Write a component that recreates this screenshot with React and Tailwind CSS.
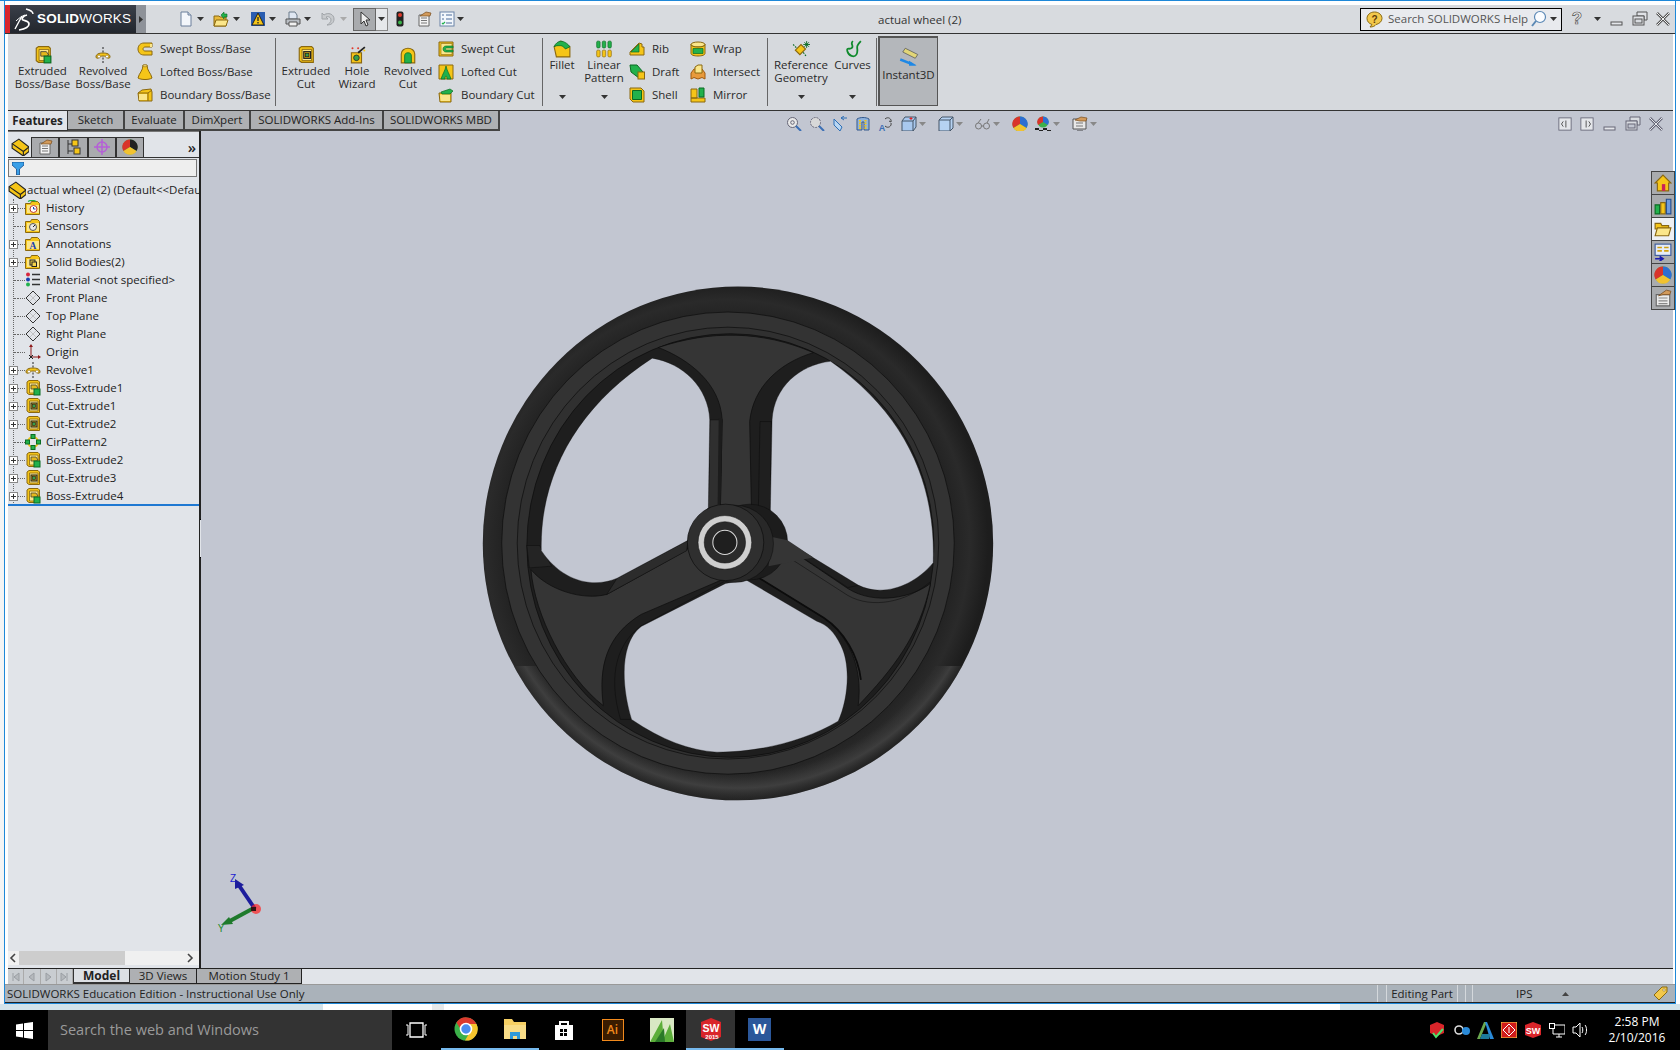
import React from "react";

const Y = "#f5c518";
const YL = "#fbe68a";
const O = "#8a6810";
const G = "#22b14c";
const GD = "#0b6b22";

const Ic = ({ s = 16, children }) => (
  <svg width={s} height={s} viewBox="0 0 16 16" className="shrink-0">
    {children}
  </svg>
);

const Cube = ({ s = 16, children }) => (
  <Ic s={s}>
    <path d="M2 2l2-1.500h9l1.500 1.500v12.500H4L2 13z" fill={Y} stroke={O} />
    <path d="M4.500 3h8.500v10H4.500z" fill={YL} stroke={O} strokeWidth=".8" />
    {children}
  </Ic>
);
const BossIcon = ({ s }) => (
  <Cube s={s}>
    <path d="M6 5h5l2 3-2 1H6z" fill="#e5b91c" stroke="#333" strokeWidth=".7" />
    <rect x="9" y="9" width="6" height="6" fill={G} stroke={GD} />
  </Cube>
);
const CutIcon = ({ s }) => (
  <Cube s={s}>
    <rect x="6" y="5" width="6" height="6" fill="#c79e18" stroke="#222" />
    <rect x="7.500" y="6.500" width="3" height="3" fill="#35a04a" stroke="#222" strokeWidth=".6" />
  </Cube>
);
const RevolveIcon = () => (
  <Ic>
    <path d="M8 0v16" stroke="#222" strokeWidth="1" strokeDasharray="2 1.500" />
    <path d="M1 10c0-3 3-4 7-4s7 1 7 4c0 1.500-2 1.500-3 .5-1-1-2-1.500-4-1.500s-3 .5-4 1.500-3 1-3-.5z" fill={Y} stroke={O} />
    <circle cx="4" cy="9.500" r="1.500" fill="#fff" stroke={O} strokeWidth=".6" />
    <circle cx="12" cy="9.500" r="1.500" fill="#fff" stroke={O} strokeWidth=".6" />
  </Ic>
);
const SweptBoss = () => (
  <Ic>
    <path d="M15 2H7C3 2 1 5 1 8s2 6 6 6h8v-4H8C7 10 6 9 6 8s1-2 2-2h7z" fill={Y} stroke={O} />
    <path d="M14 3v3" stroke={YL} strokeWidth="2" />
  </Ic>
);
const LoftBoss = () => (
  <Ic>
    <path d="M6 1h4c0 6 4 8 5 13-3 2-11 2-14 0 1-5 5-7 5-13z" fill={Y} stroke={O} />
    <ellipse cx="8" cy="1.800" rx="2" ry="1" fill={YL} stroke={O} strokeWidth=".6" />
  </Ic>
);
const BoundaryBoss = () => (
  <Ic>
    <path d="M1 6l4-3 9-1 1 3v9H2z" fill={Y} stroke={O} />
    <path d="M1 6h10l4-3M11 6v8" fill="none" stroke={O} />
    <path d="M2 7h8v6H2z" fill={YL} />
  </Ic>
);
const SweptCut = () => (
  <Ic>
    <path d="M1 1h14v14H1z" fill={Y} stroke={O} />
    <path d="M3 2.500h11v11H3z" fill={YL} stroke={O} strokeWidth=".6" />
    <path d="M15 5H8C6 5 5 6.500 5 8s1 3 3 3h7V9H8.500C8 9 7.500 8.500 7.500 8s.5-1 1-1H15z" fill={G} stroke={GD} strokeWidth=".6" />
  </Ic>
);
const LoftCut = () => (
  <Ic>
    <path d="M1 1h14v14H1z" fill={Y} stroke={O} />
    <path d="M8 2C7 7 5 9 3 15h4c0-2 .5-3 1-3s1 1 1 3h4C11 9 9 7 8 2z" fill={G} stroke={GD} strokeWidth=".7" />
  </Ic>
);
const BoundaryCut = () => (
  <Ic>
    <path d="M1 6h12v9H2z" fill={Y} stroke={O} />
    <path d="M2 7.500h10V14H2.500z" fill={YL} />
    <path d="M3 5l9-3 3 2-3 3H4z" fill={G} stroke={GD} strokeWidth=".7" />
  </Ic>
);
const Wizard = () => (
  <Ic s={18}>
    <path d="M3 6h9v9H3z" fill={Y} stroke={O} />
    <circle cx="7.500" cy="10.500" r="2.500" fill="#35a04a" stroke="#222" strokeWidth=".7" />
    <path d="M9 6l6-5" stroke="#222" strokeWidth="1.500" />
    <circle cx="4" cy="2" r=".9" fill="#e0392b" />
    <circle cx="9" cy="2" r=".9" fill="#e0392b" />
    <circle cx="14.500" cy="4" r=".9" fill={Y} />
  </Ic>
);
const RevolveCut = () => (
  <Ic s={18}>
    <path d="M2 15V7c0-3 3-5 6-5s6 2 6 5v8z" fill={Y} stroke={O} />
    <path d="M5 15V9c0-2 1-3 3-3s3 1 3 3v6z" fill={G} stroke={GD} strokeWidth=".7" />
  </Ic>
);
const Fillet = () => (
  <Ic s={18}>
    <path d="M1 6l6-5 8 5v9H3z" fill={Y} stroke={O} />
    <path d="M1 6c1-3 4-5 6-5 3 0 7 3 8 5l-4 2C9 5 7 5 6 5 4 5 2 5 1 6z" fill={G} stroke={GD} strokeWidth=".7" />
  </Ic>
);
const LinearPattern = () => (
  <Ic s={18}>
    {[1.500, 6.500, 11.500].map((x) => (
      <g key={x}>
        <rect x={x} y="1" width="3" height="6" rx="1" fill={G} stroke={GD} strokeWidth=".6" />
        <rect x={x} y="9" width="3" height="6" rx="1" fill={Y} stroke={O} strokeWidth=".6" />
      </g>
    ))}
  </Ic>
);
const Rib = () => (
  <Ic>
    <path d="M1 14V11l9-9 3 1v3h2v8z" fill={Y} stroke={O} />
    <path d="M2 11l8-8v8z" fill={G} stroke={GD} strokeWidth=".7" />
  </Ic>
);
const Draft = () => (
  <Ic>
    <path d="M1 1l7 0 6 7-4 6-8-6z" fill={G} stroke={GD} />
    <rect x="9" y="8" width="6.500" height="7" fill={Y} stroke={O} />
  </Ic>
);
const Shell = () => (
  <Ic>
    <path d="M1 1h11l3 3v11H4l-3-3z" fill={Y} stroke={O} />
    <path d="M3.500 3.500h9v9h-9z" fill={G} stroke={GD} />
  </Ic>
);
const Wrap = () => (
  <Ic>
    <ellipse cx="8" cy="3.500" rx="7" ry="2.500" fill={YL} stroke={O} />
    <path d="M1 3.500v9c0 1.500 3 2.500 7 2.500s7-1 7-2.500v-9c0 1.500-3 2.500-7 2.500s-7-1-7-2.500z" fill={Y} stroke={O} />
    <path d="M3 7.500h10v5H3z" fill={G} stroke={GD} strokeWidth=".7" />
  </Ic>
);
const Intersect = () => (
  <Ic>
    <path d="M1 9l3-4h8l3 4v6l-3-1.500L8 15l-4-1.500L1 15z" fill="#e89a3c" stroke="#a05a10" />
    <path d="M5 3l3-2h4v8H5z" fill={YL} stroke={O} />
  </Ic>
);
const Mirror = () => (
  <Ic>
    <path d="M1 2h6v9H1zM1 11h14v4H1z" fill={Y} stroke={O} />
    <path d="M9 1h5v9H9z" fill={G} stroke={GD} />
  </Ic>
);
const RefGeom = () => (
  <Ic s={18}>
    <path d="M3 9l5-5 4 4-5 5z" fill={Y} stroke={O} />
    <path d="M1 4l3 3M10 11l3 4" stroke={GD} strokeDasharray="1.500 1" />
    <path d="M13 1v6M10 4h6M11 2l4 4M15 2l-4 4" stroke={GD} strokeWidth=".8" />
  </Ic>
);
const Curves = () => (
  <Ic s={18}>
    <path d="M8 1C5 3 9 5 7 7S2 6 3 10s6 6 8 3 0-6 1-8 2-3 3-4" fill="none" stroke="#0f8a2c" strokeWidth="1.600" />
  </Ic>
);
const Instant3D = () => (
  <Ic s={20}>
    <path d="M5 1l10 5-2 3L3 4z" fill="#e2d677" stroke="#555" strokeWidth=".6" />
    <path d="M1 10l9 3.500" stroke="#1e88e5" strokeWidth="2" />
    <path d="M8 11l6 3.500-1 .5H8z" fill="#1e88e5" />
  </Ic>
);

// quick access toolbar
const NewDoc = () => (
  <Ic>
    <path d="M3 1h7l3 3v11H3z" fill="#f3f6fb" stroke="#6b7f9b" />
    <path d="M10 1v3h3" fill="#d0d9e6" stroke="#6b7f9b" />
  </Ic>
);
const OpenDoc = () => (
  <Ic>
    <path d="M1 5h5l1 1h6v9H1z" fill="#e9b93a" stroke={O} />
    <path d="M3 9h12l-2 6H1z" fill={YL} stroke={O} />
    <path d="M8 4l3-3v2h3v3h-3v2z" fill={G} stroke={GD} strokeWidth=".6" />
  </Ic>
);
const FileProps = () => (
  <Ic>
    <rect x="1" y="1" width="14" height="14" fill="#2a5db0" />
    <path d="M8 2l6 12H2z" fill={Y} stroke="#222" />
    <path d="M8 6v4M8 11v1.500" stroke="#222" strokeWidth="1.300" />
  </Ic>
);
const PrintI = () => (
  <Ic>
    <path d="M4 1h6l2 3v4H4z" fill="#dfe7f2" stroke="#6a7a8a" />
    <path d="M1 8h14v5H1z" fill="#b9bec4" stroke="#555" />
    <path d="M4 11h8v4H4z" fill="#f0f0f0" stroke="#555" />
  </Ic>
);
const UndoI = () => (
  <Ic>
    <path d="M2 2v6h6L6 6c2-1 5 0 5 3 0 2-2 4-4 5 4 0 7-2 7-6 0-5-6-7-10-4z" fill="#c8cbce" stroke="#a0a4a8" />
  </Ic>
);
const ArrowCursor = () => (
  <Ic>
    <path d="M4 1v12l3-3 2 5 2-1-2-5h4z" fill="#eee" stroke="#333" />
  </Ic>
);
const Traffic = () => (
  <Ic>
    <rect x="4.500" y="0.500" width="7" height="15" rx="2" fill="#222" />
    <circle cx="8" cy="4" r="2" fill="#e0392b" />
    <circle cx="8" cy="11.500" r="2" fill="#3bb54a" />
  </Ic>
);
const OptionsI = () => (
  <Ic>
    <path d="M3 4h10v11H3z" fill="#f3f3f3" stroke="#666" />
    <path d="M5 7h6M5 9.500h6M5 12h6" stroke="#777" />
    <path d="M4 5l6-4 5 1-1 3H8z" fill="#d29a5b" stroke="#7a4d1d" strokeWidth=".7" />
  </Ic>
);
const ListI = () => (
  <Ic>
    <rect x="1" y="1" width="14" height="14" fill="#f3f7fc" stroke="#6b84a8" />
    <path d="M3 4h2M7 4h6M3 8h2M7 8h6M7 12h6" stroke="#4a6a9a" />
    <path d="M3 12l1 1 2-2" stroke={G} fill="none" strokeWidth="1.200" />
  </Ic>
);
const Caret = ({ c = "#333" }) => (
  <svg width="7" height="4" viewBox="0 0 7 4" className="shrink-0">
    <path d="M0 0h7L3.500 4z" fill={c} />
  </svg>
);

// feature tree
const Folder = ({ children }) => (
  <Ic>
    <path d="M0.500 3.500h5l1-2h6l2 2v11h-14z" fill={Y} stroke={O} />
    <path d="M2 5h12v8H2z" fill={YL} />
    {children}
  </Ic>
);
const TreeIcons = {
  history: (
    <Folder>
      <circle cx="8.500" cy="9" r="3.500" fill="#fff" stroke="#c0392b" />
      <path d="M8.500 7v2h2" stroke="#1a3fb0" fill="none" />
      <path d="M3 1.500c3-2 7-1 8 0" stroke={G} fill="none" strokeWidth="1.200" />
    </Folder>
  ),
  sensors: (
    <Folder>
      <circle cx="8" cy="9" r="3.500" fill="#e8e8e8" stroke="#555" />
      <path d="M8 9l2-2" stroke="#222" />
    </Folder>
  ),
  annotations: (
    <Folder>
      <text x="8" y="12.500" textAnchor="middle" fontSize="9.500" fontWeight="700" fontFamily="Liberation Serif, serif" fill="#1a3fb0">A</text>
    </Folder>
  ),
  solid: (
    <Folder>
      <rect x="5" y="6" width="5" height="5" fill="#f5d44a" stroke="#222" />
      <rect x="7" y="8" width="4.500" height="4.500" fill="#f5d44a" stroke="#222" />
    </Folder>
  ),
  material: (
    <Ic>
      <circle cx="3" cy="2.500" r="2" fill="#d7263d" />
      <circle cx="3" cy="7.500" r="2" fill="#1a3fb0" />
      <circle cx="3" cy="12.500" r="2" fill="#22b14c" />
      <path d="M7 2.500h8M7 7.500h8M7 12.500h8" stroke="#333" strokeWidth="1.600" />
    </Ic>
  ),
  plane: (
    <Ic>
      <path d="M8 1l7 7-7 7-7-7z" fill="none" stroke="#333" />
      <path d="M4.500 4.500l7 7M11.500 4.500l-7 7" stroke="#aaa" strokeWidth=".6" />
    </Ic>
  ),
  origin: (
    <Ic>
      <path d="M6 13V3" stroke="#8e1b1b" />
      <path d="M6 13h8" stroke="#8e1b1b" />
      <path d="M6 0l-2 3h4zM16 13l-3-2v4z" fill="#8e1b1b" />
      <path d="M4 11l4 4M8 11l-4 4" stroke="#222" />
    </Ic>
  ),
  revolve: <RevolveIcon />,
  boss: <BossIcon />,
  cut: <CutIcon />,
  pattern: (
    <Ic>
      <circle cx="8" cy="8" r="5" fill="none" stroke={Y} strokeWidth="2" />
      <rect x="6" y="0.500" width="4" height="4" fill={G} stroke={GD} />
      <rect x="6" y="11.500" width="4" height="4" fill={G} stroke={GD} />
      <rect x="0.500" y="6" width="4" height="4" fill={G} stroke={GD} />
      <rect x="11.500" y="6" width="4" height="4" fill={G} stroke={GD} />
    </Ic>
  ),
};

const TREE = [
  { label: "History", icon: "history", plus: true },
  { label: "Sensors", icon: "sensors" },
  { label: "Annotations", icon: "annotations", plus: true },
  { label: "Solid Bodies(2)", icon: "solid", plus: true },
  { label: "Material <not specified>", icon: "material" },
  { label: "Front Plane", icon: "plane" },
  { label: "Top Plane", icon: "plane" },
  { label: "Right Plane", icon: "plane" },
  { label: "Origin", icon: "origin" },
  { label: "Revolve1", icon: "revolve", plus: true },
  { label: "Boss-Extrude1", icon: "boss", plus: true },
  { label: "Cut-Extrude1", icon: "cut", plus: true },
  { label: "Cut-Extrude2", icon: "cut", plus: true },
  { label: "CirPattern2", icon: "pattern" },
  { label: "Boss-Extrude2", icon: "boss", plus: true },
  { label: "Cut-Extrude3", icon: "cut", plus: true },
  { label: "Boss-Extrude4", icon: "boss", plus: true },
];

function TreeRow({ row }) {
  return (
    <div className="flex items-center h-[18px]">
      {row.plus ? (
        <span className="-ml-[5px] w-[9px] h-[9px] shrink-0 border border-[#888] bg-white flex items-center justify-center text-[9px] leading-none text-[#333]">
          <svg width="5" height="5" viewBox="0 0 5 5">
            <path d="M0 2.500h5M2.500 0v5" stroke="#333" />
          </svg>
        </span>
      ) : (
        <span className="w-[4px] shrink-0 border-t border-dotted border-[#666]" />
      )}
      <span className="w-[7px] shrink-0 border-t border-dotted border-[#666]" />
      {TreeIcons[row.icon]}
      <span className="ml-[5px] whitespace-nowrap">{row.label}</span>
    </div>
  );
}

function BigBtn({ w, icon, lines, top, arrow }) {
  return (
    <div className={`${w} flex flex-col items-center shrink-0 ${top ? "pt-[5px]" : "pt-[11px]"}`}>
      <div className="h-[19px] flex items-center justify-center">{icon}</div>
      <div className="leading-[13px] text-center whitespace-nowrap">
        {lines.map((l) => (
          <div key={l}>{l}</div>
        ))}
      </div>
      {arrow && (
        <div className="mt-auto mb-[11px]">
          <Caret />
        </div>
      )}
    </div>
  );
}

function SmallGroup({ w, items }) {
  return (
    <div className={`${w} shrink-0 pt-[3px] flex flex-col`}>
      {items.map(([icon, label]) => (
        <div key={label} className="h-[23px] flex items-center gap-[7px] whitespace-nowrap">
          {icon}
          <span>{label}</span>
        </div>
      ))}
    </div>
  );
}

const Sep = () => <div className="w-px my-[4px] bg-[#666] shrink-0" />;

const TABS = [
  ["Sketch", "w-[57px]"],
  ["Evaluate", "w-[60px]"],
  ["DimXpert", "w-[66px]"],
  ["SOLIDWORKS Add-Ins", "w-[133px]"],
  ["SOLIDWORKS MBD", "w-[116px]"],
];

function WheelHeadsUp() {
  return (
    <div className="flex items-center ml-auto mt-[5px] h-[16px]">
      <div className="flex items-center absolute left-[778px]">
        <div className="w-[23px]"><Ic><circle cx="6.500" cy="6.500" r="5" fill="#e8e8e8" stroke="#667" /><circle cx="6.500" cy="6.500" r="1.800" fill="none" stroke="#667" /><path d="M10 10l5 5" stroke="#3b6fb5" strokeWidth="2" /></Ic></div>
        <div className="w-[23px]"><Ic><circle cx="6.500" cy="6.500" r="5" fill="#d8d8d8" stroke="#667" strokeDasharray="2 1" /><path d="M10 10l5 5" stroke="#3b6fb5" strokeWidth="2" /></Ic></div>
        <div className="w-[23px]"><Ic><path d="M2 3l8 8-2 4-6-6z" fill="#b9d6f2" stroke="#2c6eb5" /><path d="M9 2h6M9 2l3-2M9 2l3 2" stroke="#2c6eb5" /></Ic></div>
        <div className="w-[23px]"><Ic><path d="M2 3c3-2 9-2 12 0v11H9V6H7v8H2z" fill="#8fb3dd" stroke="#34598c" /><path d="M5 4v10M10.500 4v10" stroke={Y} strokeWidth="2" strokeDasharray="1.500 1" /></Ic></div>
        <div className="w-[23px]"><Ic><path d="M7 3c3-3 7 0 6 3M13 6l-2-1M7 10c3 3 7 0 6-3" fill="none" stroke="#444" /><text x="4" y="15" fontSize="9" fontWeight="700" fill="#3b6fb5" textAnchor="middle" fontFamily="Liberation Sans, sans-serif">A</text></Ic></div>
        <div className="w-[18px]"><Ic><path d="M1 5l3-4h11v10l-3 4H1z" fill="#a8c8ee" stroke="#456" /><path d="M1 5h11v10M12 5l3-4" fill="none" stroke="#456" /><path d="M10 1v3M8.500 2.500h3" stroke="#d22" /></Ic></div>
        <div className="w-[19px]"><Caret c="#888" /></div>
        <div className="w-[18px]"><Ic><path d="M1 4l3-3h11v11l-3 3H1z" fill="#b6d2f2" stroke="#456" /><path d="M12 4v11M12 4l3-3M1 4h11" fill="none" stroke="#456" /></Ic></div>
        <div className="w-[19px]"><Caret c="#888" /></div>
        <div className="w-[18px]"><Ic><circle cx="3.500" cy="10" r="3" fill="none" stroke="#777" /><circle cx="11.500" cy="10" r="3" fill="none" stroke="#777" /><path d="M6.500 10h2M3 7l3-4M12 7l2-4" stroke="#777" /></Ic></div>
        <div className="w-[19px]"><Caret c="#888" /></div>
        <div className="w-[23px]"><Ic><circle cx="8" cy="8" r="7.500" fill="#3cb14a" /><path d="M8 8V.500A7.500 7.500 0 0 0 1.500 12z" fill="#d9342b" /><path d="M8 8V.500a7.500 7.500 0 0 1 6.500 11.500z" fill="#2e6fd2" /><path d="M8 8l-6.500 4A7.500 7.500 0 0 0 14.500 12z" fill="#f2c230" /></Ic></div>
        <div className="w-[18px]"><Ic><circle cx="8" cy="6" r="5.500" fill="#3cb14a" /><path d="M8 6V.500A5.500 5.500 0 0 0 3 9z" fill="#d9342b" /><path d="M8 6V.500a5.500 5.500 0 0 1 5 8.500z" fill="#2e6fd2" /><path d="M0 12h4v2H0zM4 14h4v2H4zM8 12h4v2H8zM12 14h4v2h-4z" fill="#222" /></Ic></div>
        <div className="w-[19px]"><Caret c="#888" /></div>
        <div className="w-[18px]"><Ic><path d="M1 3h13v10H1z" fill="#e8e8e8" stroke="#555" /><path d="M4 7h7M4 10h7" stroke="#777" /><path d="M3 4l6-3 6 1-1 3H8z" fill="#d29a5b" stroke="#7a4d1d" strokeWidth=".7" /><path d="M5 15h6" stroke="#444" /></Ic></div>
        <Caret c="#888" />
      </div>
      <div className="flex items-center absolute right-[9px] gap-[7px] text-[#666]">
        {["M6 5L4 8l2 3M9 4v8", "M10 5l2 3-2 3M7 4v8"].map((d) => (
          <svg key={d} width="14" height="14" viewBox="0 0 16 16" className="mr-[1px]">
            <rect x="1" y="1" width="14" height="14" fill="#e4e6ea" stroke="#667" />
            <path d={d} stroke="#444" fill="none" />
          </svg>
        ))}
        <svg width="16" height="16" viewBox="0 0 16 16">
          <rect x="2" y="11" width="11" height="3" fill="#e4e6ea" stroke="#667" />
        </svg>
        <svg width="16" height="16" viewBox="0 0 16 16">
          <path d="M5 1h10v8h-3V5H5z" fill="#d8dbe0" stroke="#667" />
          <rect x="1" y="5" width="11" height="9" fill="#d8dbe0" stroke="#667" />
          <rect x="3" y="8" width="7" height="4" fill="#c2c6d1" stroke="#667" />
        </svg>
        <svg width="16" height="16" viewBox="0 0 16 16">
          <path d="M2 2l12 12M14 2L2 14" stroke="#667" strokeWidth="2.600" />
          <path d="M2 2l12 12M14 2L2 14" stroke="#e4e6ea" strokeWidth="1" />
        </svg>
      </div>
    </div>
  );
}

// drawn in the units of a 540px crop scaled to 1568
function Wheel() {
  const line = "#0c0c0c";
  return (
    <svg viewBox="0 0 1568 1568" className="absolute left-[268px] top-[139px] w-[540px] h-[540px]">
      <defs>
        <radialGradient id="tire" cx="0.480" cy="0.500" r="0.510">
          <stop offset="0.860" stopColor="#222222" />
          <stop offset="0.930" stopColor="#2a2a2a" />
          <stop offset="1" stopColor="#1d1d1d" />
        </radialGradient>
        <radialGradient id="lower" cx="0.500" cy="0.490" r="0.520">
          <stop offset="0.880" stopColor="#3c3c3c" stopOpacity="0" />
          <stop offset="0.935" stopColor="#444444" stopOpacity="0.8" />
          <stop offset="1" stopColor="#222" stopOpacity="0" />
        </radialGradient>
        <clipPath id="lowerClip">
          <path d="M100 1150h1350v420H100z" />
        </clipPath>
      </defs>
      <ellipse cx="781" cy="794" rx="741" ry="746" fill="url(#tire)" />
      <ellipse cx="781" cy="794" rx="741" ry="746" fill="url(#lower)" clipPath="url(#lowerClip)" />
      <ellipse cx="752" cy="793" rx="657" ry="671" fill="#333333" stroke={line} strokeWidth="2" />
      <ellipse cx="752" cy="793" rx="612" ry="627" fill="#303030" stroke={line} strokeWidth="2" />
      <ellipse cx="759" cy="800" rx="591" ry="615" fill="#1e1e1e" stroke={line} strokeWidth="2" />
      {/* spokes face */}
      <path
        d="M550 225C640 260 730 330 735 435L730 690 630 815 400 942C330 960 230 930 180 870C190 1000 280 1180 390 1265C375 1150 400 1060 500 1000L745 895 835 890 1030 1010C1100 1060 1145 1150 1130 1265C1230 1160 1310 1060 1340 910C1290 950 1180 975 1100 925L885 780 820 690 815 440C825 340 900 270 1000 240C850 175 700 175 550 225Z"
        fill="#353535"
        stroke={line}
        strokeWidth="2"
      />
      {/* side walls */}
      <path d="M845 440L878 440 875 705 840 708Z" fill="#1f1f1f" stroke={line} strokeWidth="1.500" />
      <path d="M878 775L925 785 1135 915 1100 922Z" fill="#1f1f1f" stroke={line} strokeWidth="1.500" />
      <path d="M168 800L205 800 240 860 175 865Z" fill="#242424" stroke={line} strokeWidth="1.500" />
      <path d="M500 1033C435 1080 400 1170 440 1305L472 1305 480 1100Z" fill="#1e1e1e" stroke={line} strokeWidth="1.500" />
      <path d="M700 435L735 435 730 690 695 690Z" fill="#2f2f2f" stroke={line} strokeWidth="1.500" />
      <path d="M725 430L735 430 730 680 722 680Z" fill="#1c1c1c" />
      <path d="M430 895L636 785 632 815 400 942Z" fill="#2c2c2c" stroke={line} strokeWidth="1.500" />
      <path d="M835 890L1030 1010C1090 1050 1130 1120 1138 1190" fill="none" stroke={line} strokeWidth="5" />
      <path d="M890 810L1100 945C1170 985 1270 965 1340 905" fill="none" stroke={line} strokeWidth="1.500" />
      <path d="M740 905L500 1033" fill="none" stroke={line} strokeWidth="1.500" />
      {/* holes */}
      <path d="M532 256C620 270 695 340 699 435L695 690 636 785 430 895C360 925 270 905 210 815C205 600 310 400 532 256Z" fill="#c2c6d1" stroke={line} strokeWidth="1" />
      <path d="M1050 265C960 275 885 340 880 435L875 700 925 790 1130 915C1200 950 1290 920 1348 850C1355 620 1270 420 1050 265Z" fill="#c2c6d1" stroke={line} strokeWidth="1" />
      <path d="M745 910L500 1035C440 1080 440 1200 472 1305C560 1365 640 1395 720 1400C850 1400 980 1365 1072 1310C1100 1250 1110 1150 1080 1090C1060 1050 1040 1030 1010 1020L805 900Z" fill="#c2c6d1" stroke={line} strokeWidth="1" />
      {/* hub */}
      <circle cx="815" cy="790" r="110" fill="#1c1c1c" stroke={line} strokeWidth="1.500" />
      <path d="M880 775L925 785 1000 835 870 860Z" fill="#353535" />
      <circle cx="772" cy="795" r="112" fill="#282828" stroke={line} strokeWidth="1.500" />
      <circle cx="745" cy="791" r="111" fill="#2f2f2f" stroke={line} strokeWidth="2" />
      <circle cx="743" cy="791" r="78" fill="#cfcfcf" stroke={line} strokeWidth="1.500" />
      <circle cx="743" cy="791" r="60" fill="#2b2b2b" stroke={line} strokeWidth="1.500" />
      <circle cx="743" cy="791" r="35" fill="#1f1f1f" stroke="#d8d8d8" strokeWidth="3" />
    </svg>
  );
}

function Triad() {
  return (
    <svg viewBox="0 0 60 65" className="absolute left-[10px] top-[739px] w-[60px] h-[65px]">
      <path d="M44 39L27 14" stroke="#1c1c9c" strokeWidth="4" />
      <path d="M24 9l9 6-9 4z" fill="#1c1c9c" />
      <path d="M41 39L17 52" stroke="#1f7a2c" strokeWidth="4" />
      <path d="M10 55l8-8 4 7z" fill="#1f7a2c" />
      <circle cx="45" cy="39" r="5" fill="#f22" opacity=".7" />
      <rect x="40" y="37" width="5" height="4" fill="#311" />
      <text x="22" y="12" fontSize="10" fill="#2020d0" textAnchor="middle" fontFamily="Liberation Sans, sans-serif">Z</text>
      <text x="10" y="62" fontSize="10" fill="#1f8a2c" textAnchor="middle" fontFamily="Liberation Sans, sans-serif">Y</text>
    </svg>
  );
}

const TaskBtn = ({ light, children }) => (
  <div className={`w-[24px] h-[24px] -mb-px flex items-center justify-center border border-[#444] ${light ? "bg-[#eef0f3]" : "bg-[#a9abae]"}`}>
    {children}
  </div>
);

function TaskPane() {
  return (
    <div className="absolute -right-[2px] top-[40px] flex flex-col">
      <TaskBtn>
        <Ic s={18}>
          <path d="M1 8l7-7 7 7h-2v7H3V8z" fill={Y} stroke={O} />
          <rect x="7" y="9" width="3" height="6" fill="#c25" />
        </Ic>
      </TaskBtn>
      <TaskBtn>
        <Ic s={18}>
          <path d="M1 7h4v8H1z" fill={G} stroke={GD} />
          <path d="M6 5h4v10H6z" fill={Y} stroke={O} />
          <path d="M11 2h4v13h-4z" fill="#6f9bdc" stroke="#234c8c" />
        </Ic>
      </TaskBtn>
      <TaskBtn light>
        <Ic s={18}>
          <path d="M1 3h5l1 2h6v3H1z" fill={Y} stroke={O} />
          <path d="M3 7h12l-2 7H1z" fill={YL} stroke={O} />
        </Ic>
      </TaskBtn>
      <TaskBtn>
        <Ic s={18}>
          <rect x="1" y="1" width="14" height="10" fill="#e6ecf8" stroke="#3a5a9c" />
          <path d="M3 4h4M9 4h4M3 7h4M9 7h4" stroke="#d0a010" strokeWidth="1.500" />
          <path d="M1 14h6M5 12l3 2-3 2" stroke="#1a1ab0" strokeWidth="1.500" fill="none" />
        </Ic>
      </TaskBtn>
      <TaskBtn>
        <Ic s={18}>
          <circle cx="8" cy="8" r="7.500" fill="#3cb14a" />
          <path d="M8 8V.500A7.500 7.500 0 0 0 1.500 12z" fill="#d9342b" />
          <path d="M8 8V.500a7.500 7.500 0 0 1 6.500 11.500z" fill="#2e6fd2" />
          <path d="M8 8l-6.500 4A7.500 7.500 0 0 0 14.500 12z" fill="#f2c230" />
        </Ic>
      </TaskBtn>
      <TaskBtn>
        <Ic s={18}>
          <path d="M2 5h12v10H2z" fill="#ececec" stroke="#666" />
          <path d="M4 8h8M4 10.500h8M4 13h8" stroke="#888" />
          <path d="M4 6l7-5 4 1-1 3H8z" fill="#d29a5b" stroke="#7a4d1d" strokeWidth=".7" />
        </Ic>
      </TaskBtn>
    </div>
  );
}

const PanelTab = ({ active, w, children }) => (
  <div className={`${w} h-[21px] flex items-center justify-center ${active ? "" : "border border-[#333] bg-[#a9abae]"}`}>
    {children}
  </div>
);

function Panel() {
  return (
    <div className="relative w-[193px] shrink-0 bg-[#e1e4e9] border-r-2 border-[#222] flex flex-col">
      <div className="h-[6px] border-t border-[#777] border-b-0" />
      <div className="flex items-center h-[21px] border-b border-[#333]">
        <PanelTab active w="w-[23px]">
          <Ic s={18}>
            <path d="M1 5l6-4 9 7v4l-5 4-10-7z" fill={Y} stroke="#222" />
            <path d="M1 5l10 7 5-4M11 12v4" fill="none" stroke="#222" />
          </Ic>
        </PanelTab>
        <PanelTab w="w-[28px]"><OptionsI /></PanelTab>
        <PanelTab w="w-[29px]">
          <Ic>
            <path d="M2 1v14M2 5h4M2 12h5" stroke="#333" />
            <rect x="6" y="1" width="6" height="6" fill={Y} stroke="#333" />
            <rect x="8" y="9" width="6" height="6" fill={Y} stroke="#333" />
          </Ic>
        </PanelTab>
        <PanelTab w="w-[28px]">
          <Ic>
            <circle cx="8" cy="8" r="5" fill="none" stroke="#b55fd8" strokeWidth="1.500" />
            <path d="M8 0v16M0 8h16" stroke="#b55fd8" strokeWidth="1.500" />
          </Ic>
        </PanelTab>
        <PanelTab w="w-[28px]">
          <Ic>
            <circle cx="8" cy="8" r="7.500" fill="#3cb14a" />
            <path d="M8 8V.500A7.500 7.500 0 0 0 1.500 12z" fill="#d9342b" />
            <path d="M8 8V.500a7.500 7.500 0 0 1 6.500 11.500z" fill="#222" />
            <path d="M8 8l-6.500 4A7.500 7.500 0 0 0 14.500 12z" fill="#f2c230" />
          </Ic>
        </PanelTab>
        <span className="ml-auto mr-[3px] text-[15px] font-semibold leading-none text-[#222]">»</span>
      </div>
      <div className="mt-[1px] h-[18px] bg-[#eeeeee] border border-[#777] mr-[2px] flex items-center pl-[3px]">
        <svg width="12" height="13" viewBox="0 0 12 13">
          <path d="M0 0h12v3L7.500 7v6h-3V7L0 3z" fill="#3aa0e8" stroke="#134a8c" strokeWidth=".8" />
        </svg>
      </div>
      <div className="mt-[4px] flex items-center h-[18px] whitespace-nowrap overflow-hidden">
        <Ic s={18}>
          <path d="M1 5l6-4 9 7v4l-5 4-10-7z" fill={Y} stroke="#222" />
          <path d="M1 5l10 7 5-4M11 12v4" fill="none" stroke="#222" />
        </Ic>
        <span className="ml-px">actual wheel (2)  (Default&lt;&lt;Default&gt;_Display State 1&gt;)</span>
      </div>
      <div className="ml-[5px] border-l border-dotted border-[#666]">
        {TREE.map((row) => (
          <TreeRow key={row.label} row={row} />
        ))}
      </div>
      <div className="h-[2px] bg-[#1e78d2] -mt-px" />
      <div className="flex-1" />
      <div className="h-[14px] mb-[3px] bg-[#f0f0f0] flex items-center justify-between text-[#555]">
        <svg width="11" height="10" viewBox="0 0 11 10" className="shrink-0">
          <path d="M7 1L3 5l4 4" stroke="#444" strokeWidth="1.600" fill="none" />
        </svg>
        <div className="h-full w-[106px] bg-[#cdcdcd] mr-auto ml-0" />
        <svg width="11" height="10" viewBox="0 0 11 10" className="shrink-0 mr-[3px]">
          <path d="M3 1l4 4-4 4" stroke="#444" strokeWidth="1.600" fill="none" />
        </svg>
      </div>
      {/* collapse handle */}
      <div className="absolute -right-[10px] top-[388px] w-[9px] h-[39px] bg-[#e1e4e9] border border-l-0 border-black flex flex-col items-center justify-around py-[4px]">
        {[0, 1, 2].map((i) => (
          <svg key={i} width="4" height="6" viewBox="0 0 4 6">
            <path d="M4 0v6L0 3z" fill="#333" />
          </svg>
        ))}
      </div>
    </div>
  );
}

function TitleBar() {
  return (
    <div className="h-[29px] flex items-center bg-[#d8dbdf] border-b border-[#333] relative">
      <div className="h-[28px] w-[141px] flex items-stretch shrink-0">
        <div className="w-[5px] bg-[#d8252c]" />
        <div className="flex-1 bg-gradient-to-b from-[#3a3f49] to-[#22262d] flex items-center pl-[4px] gap-[2px] text-white">
          <svg width="21" height="23" viewBox="0 0 21 23">
            <path d="M5 22c6-1 10-3 10-6s-4-3-6-4 0-4 4-5" fill="none" stroke="#fff" strokeWidth="1.700" />
            <path d="M1 21L8 8M12 1c4 1 7 3 7 5" fill="none" stroke="#fff" strokeWidth="1.400" />
            <path d="M2 13c3-3 6-5 9-6" fill="none" stroke="#fff" strokeWidth="1" />
          </svg>
          <span className="text-[13.500px] font-['Liberation_Sans',sans-serif] tracking-[.2px]">
            <b>SOLID</b>WORKS
          </span>
        </div>
        <div className="w-[10px] bg-[#8e9299] flex items-center justify-center">
          <svg width="4" height="7" viewBox="0 0 4 7">
            <path d="M0 0l4 3.500L0 7z" fill="#333" />
          </svg>
        </div>
      </div>
      <div className="flex items-center ml-[32px]">
        <div className="w-[19px]"><NewDoc /></div>
        <div className="w-[16px]"><Caret /></div>
        <div className="w-[20px]"><OpenDoc /></div>
        <div className="w-[17px]"><Caret /></div>
        <div className="w-[19px]"><FileProps /></div>
        <div className="w-[16px]"><Caret /></div>
        <div className="w-[19px]"><PrintI /></div>
        <div className="w-[16px]"><Caret /></div>
        <div className="w-[20px]"><UndoI /></div>
        <div className="w-[13px]"><Caret c="#aaa" /></div>
        <div className="w-[23px] h-[23px] bg-[#a9abae] border border-[#666] flex items-center justify-center"><ArrowCursor /></div>
        <div className="w-[12px] h-[23px] bg-[#e6e8eb] border border-l-0 border-[#888] flex items-center justify-center mr-[4px]"><Caret /></div>
        <div className="w-[24px]"><Traffic /></div>
        <div className="w-[23px]"><OptionsI /></div>
        <div className="w-[18px]"><ListI /></div>
        <Caret />
      </div>
      <div className="absolute left-[0px] right-[0px] top-[7px] pl-[873px] pointer-events-none text-[#333] whitespace-nowrap">actual wheel (2)</div>
      <div className="ml-auto flex items-center">
        <div className="w-[202px] h-[23px] border border-black bg-[#e8eaee] flex items-center pl-[5px] pr-[4px] text-[#555]">
          <svg width="17" height="17" viewBox="0 0 17 17" className="shrink-0">
            <path d="M8.500 1C4 1 1 4 1 7.500c0 3 2 5 5 6L4 16c3 0 5-1 6-2.500 3-.5 6-3 6-6C16 4 13 1 8.500 1z" fill="#f2c84b" stroke="#8a6a10" />
            <text x="8.500" y="11.500" textAnchor="middle" fontSize="10" fontWeight="700" fill="#5c3a0a" fontFamily="Liberation Sans, sans-serif">?</text>
          </svg>
          <span className="ml-[5px] whitespace-nowrap">Search SOLIDWORKS Help</span>
          <svg width="17" height="18" viewBox="0 0 17 18" className="ml-auto shrink-0">
            <circle cx="10" cy="7" r="5.500" fill="#fafcff" stroke="#5a88b5" strokeWidth="1.200" />
            <path d="M6 11l-4 5" stroke="#5a88b5" strokeWidth="2" />
          </svg>
          <div className="ml-[3px]"><Caret /></div>
        </div>
        <svg width="16" height="18" viewBox="0 0 16 18" className="ml-[7px]">
          <text x="8" y="14" textAnchor="middle" fontSize="17" fontWeight="700" fill="#eee" stroke="#555" strokeWidth=".7" fontFamily="Liberation Sans, sans-serif">?</text>
        </svg>
        <div className="ml-[9px]"><Caret /></div>
        <svg width="16" height="16" viewBox="0 0 16 16" className="ml-[8px]">
          <rect x="2" y="11" width="11" height="3" fill="#e4e6ea" stroke="#555" />
        </svg>
        <svg width="16" height="16" viewBox="0 0 16 16" className="ml-[7px]">
          <path d="M5 1h10v8h-3V5H5z" fill="#e0e2e6" stroke="#555" />
          <rect x="1" y="5" width="11" height="9" fill="#e0e2e6" stroke="#555" />
          <rect x="3" y="8" width="7" height="4" fill="#d8dbdf" stroke="#555" />
        </svg>
        <svg width="16" height="16" viewBox="0 0 16 16" className="ml-[7px] mr-[4px]">
          <path d="M2 2l12 12M14 2L2 14" stroke="#555" strokeWidth="2.600" />
          <path d="M2 2l12 12M14 2L2 14" stroke="#eee" strokeWidth="1" />
        </svg>
      </div>
    </div>
  );
}

function Ribbon() {
  return (
    <div className="h-[77px] ml-[3px] mr-[2px] flex items-stretch bg-[#d6d9dd] border-b border-[#333] pl-[5px] text-[#2a2a2a]">
      <BigBtn w="w-[59px]" icon={<BossIcon s={18} />} lines={["Extruded", "Boss/Base"]} />
      <BigBtn w="w-[62px]" icon={<RevolveIcon />} lines={["Revolved", "Boss/Base"]} />
      <div className="w-[3px]" />
      <SmallGroup
        w="w-[137px]"
        items={[
          [<SweptBoss />, "Swept Boss/Base"],
          [<LoftBoss />, "Lofted Boss/Base"],
          [<BoundaryBoss />, "Boundary Boss/Base"],
        ]}
      />
      <div className="w-px" />
      <Sep />
      <BigBtn w="w-[60px]" icon={<CutIcon s={18} />} lines={["Extruded", "Cut"]} />
      <BigBtn w="w-[42px]" icon={<Wizard />} lines={["Hole", "Wizard"]} />
      <BigBtn w="w-[60px]" icon={<RevolveCut />} lines={["Revolved", "Cut"]} />
      <SmallGroup
        w="w-[103px]"
        items={[
          [<SweptCut />, "Swept Cut"],
          [<LoftCut />, "Lofted Cut"],
          [<BoundaryCut />, "Boundary Cut"],
        ]}
      />
      <div className="w-px" />
      <Sep />
      <BigBtn top arrow w="w-[38px]" icon={<Fillet />} lines={["Fillet"]} />
      <BigBtn top arrow w="w-[46px]" icon={<LinearPattern />} lines={["Linear", "Pattern"]} />
      <div className="w-[2px]" />
      <SmallGroup
        w="w-[61px]"
        items={[
          [<Rib />, "Rib"],
          [<Draft />, "Draft"],
          [<Shell />, "Shell"],
        ]}
      />
      <SmallGroup
        w="w-[77px]"
        items={[
          [<Wrap />, "Wrap"],
          [<Intersect />, "Intersect"],
          [<Mirror />, "Mirror"],
        ]}
      />
      <Sep />
      <BigBtn top arrow w="w-[66px]" icon={<RefGeom />} lines={["Reference", "Geometry"]} />
      <BigBtn top arrow w="w-[37px]" icon={<Curves />} lines={["Curves"]} />
      <div className="w-[5px]" />
      <Sep />
      <div className="ml-px mt-[2px] mb-[4px] w-[60px] bg-[#b4b7bb] border border-[#555] border-t-2 border-l-2 flex flex-col items-center pt-[9px]">
        <Instant3D />
        <span className="leading-[13px] mt-[1px]">Instant3D</span>
      </div>
    </div>
  );
}

const Cell = ({ line, children }) => (
  <div className={`w-[49px] h-full shrink-0 flex items-center justify-center ${line ? "border-b-2 border-[#76b9ed]" : ""}`}>
    {children}
  </div>
);

function Taskbar() {
  return (
    <div className="h-[40px] bg-black flex items-stretch font-['Open_Sans',sans-serif] text-white shrink-0">
      <div className="w-[48px] flex items-center justify-center">
        <svg width="17" height="17" viewBox="0 0 17 17">
          <path d="M0 2.500l7-1v6.500H0zM8 1.300L17 0v8H8zM0 9h7v6.500l-7-1zM8 9h9v8l-9-1.300z" fill="#fff" />
        </svg>
      </div>
      <div className="w-[344px] bg-[#333333] flex items-center pl-[12px] text-[14.500px] text-[#9a9a9a]">Search the web and Windows</div>
      <Cell>
        <svg width="21" height="16" viewBox="0 0 21 16">
          <path d="M4 1h13v14H4z" fill="none" stroke="#fff" strokeWidth="1.300" />
          <path d="M0 3h2v10H0M21 3h-2v10h2" fill="none" stroke="#fff" />
        </svg>
      </Cell>
      <Cell line>
        <svg width="24" height="24" viewBox="0 0 24 24">
          <circle cx="12" cy="12" r="11.500" fill="#3cb14a" />
          <path d="M12 7h10.500A11.500 11.500 0 0 0 2.500 5.500L7 13z" fill="#db3a2e" />
          <path d="M12 7h10.500A11.500 11.500 0 0 1 11 23.500L16.500 14z" fill="#f6c42d" />
          <circle cx="12" cy="12" r="5.500" fill="#4b8df0" stroke="#fff" strokeWidth="1.600" />
        </svg>
      </Cell>
      <Cell line>
        <svg width="22" height="20" viewBox="0 0 22 20">
          <path d="M0 0h8l2 3h12v17H0z" fill="#f6cf63" />
          <path d="M0 6h22v14H0z" fill="#f8dc87" />
          <path d="M6 13h10v7h-3v-3H9v3H6z" fill="#2f9ad8" />
        </svg>
      </Cell>
      <Cell>
        <svg width="20" height="20" viewBox="0 0 20 20">
          <path d="M1 5h18v15H1z" fill="#fff" />
          <path d="M6 5V2h8v3" fill="none" stroke="#fff" strokeWidth="2" />
          <path d="M6 9h3v3H6zM10 9h3v3h-3zM6 13h3v3H6zM10 13h3v3h-3z" fill="#000" />
        </svg>
      </Cell>
      <Cell>
        <div className="w-[22px] h-[22px] bg-[#3a1c00] border border-[#f28a1c] text-[#f28a1c] text-[12px] leading-[20px] text-center font-semibold">Ai</div>
      </Cell>
      <Cell>
        <svg width="24" height="24" viewBox="0 0 24 24">
          <rect width="24" height="24" fill="#d9e8c4" />
          <path d="M0 24L12 2l2 22zM12 24L20 6l4 18z" fill="#5cae3a" />
          <path d="M5 24L14 10l1 14z" fill="#2b7a28" />
        </svg>
      </Cell>
      <Cell line>
        <div className="w-[49px] h-full bg-[#333] flex items-center justify-center">
          <svg width="26" height="26" viewBox="0 0 26 26">
            <path d="M3 6l10-4 10 4v15l-10 4-10-4z" fill="#d9252a" />
            <text x="13" y="16" textAnchor="middle" fontSize="10.500" fontWeight="700" fill="#fff" fontFamily="Liberation Sans, sans-serif">SW</text>
            <text x="14" y="23" textAnchor="middle" fontSize="6" fontWeight="700" fill="#fff" fontFamily="Liberation Sans, sans-serif">2015</text>
          </svg>
        </div>
      </Cell>
      <Cell line>
        <div className="w-[23px] h-[23px] bg-[#2b579a] flex items-center justify-center text-[14px] font-bold text-white leading-none">W</div>
      </Cell>
      <div className="ml-auto flex items-center">
        <div className="w-[24px] flex justify-center">
          <svg width="18" height="18" viewBox="0 0 18 18">
            <path d="M2 4l7-3 7 3v8l-7 3-7-3z" fill="#d9252a" />
            <path d="M5 12l3 4 7-8" stroke="#4de36c" strokeWidth="2" fill="none" />
          </svg>
        </div>
        <div className="w-[25px] flex justify-center">
          <svg width="16" height="12" viewBox="0 0 16 12">
            <circle cx="5" cy="6" r="4" fill="none" stroke="#ddd" strokeWidth="1.600" />
            <circle cx="12" cy="7" r="4" fill="#2a8ad8" />
          </svg>
        </div>
        <div className="w-[23px] flex justify-center">
          <svg width="17" height="17" viewBox="0 0 17 17">
            <path d="M0 17L7 0h3L5 12l-2 5z" fill="#6aa84f" />
            <path d="M8 0h2l7 17h-4z" fill="#2a8ad8" />
            <path d="M3 17l2-5h8l-1 5z" fill="#1b7a9c" />
          </svg>
        </div>
        <div className="w-[23px] flex justify-center">
          <svg width="16" height="16" viewBox="0 0 16 16">
            <rect width="16" height="16" fill="#d01a1a" stroke="#f5e04a" />
            <path d="M8 2l6 6-6 6-6-6z" fill="none" stroke="#fff" />
            <path d="M8 5v6" stroke="#fff" />
          </svg>
        </div>
        <div className="w-[25px] flex justify-center">
          <svg width="18" height="18" viewBox="0 0 18 18">
            <path d="M1 4l8-3 8 3v10l-8 3-8-3z" fill="#d9252a" />
            <text x="9" y="13" textAnchor="middle" fontSize="9" fontWeight="700" fill="#fff" fontFamily="Liberation Sans, sans-serif">SW</text>
          </svg>
        </div>
        <div className="w-[23px] flex justify-center">
          <svg width="16" height="15" viewBox="0 0 16 15">
            <path d="M4 2h12v9H4z" fill="none" stroke="#fff" />
            <rect x="0.500" y="0.500" width="5" height="5" fill="#000" stroke="#fff" />
            <path d="M7 14h6M10 11v3" stroke="#fff" />
          </svg>
        </div>
        <div className="w-[25px] flex justify-center">
          <svg width="17" height="16" viewBox="0 0 17 16">
            <path d="M1 5h3l4-4v14l-4-4H1z" fill="none" stroke="#fff" />
            <path d="M10 5c1 1 1 5 0 6M13 3c2 2 2 8 0 10" fill="none" stroke="#fff" />
          </svg>
        </div>
        <div className="w-[88px] text-center text-[12px] leading-[16px] mr-[-1px]">
          <div>2:58 PM</div>
          <div>2/10/2016</div>
        </div>
      </div>
    </div>
  );
}

export default function App() {
  return (
    <div className="w-[1680px] h-[1050px] overflow-hidden bg-white flex flex-col font-['Open_Sans',sans-serif] text-[11.500px] leading-[16px] text-[#222]">
      <div className="h-[1004px] shrink-0 flex border-t border-[#1e88d8]">
        <div className="w-[4px] shrink-0 bg-[#f4f4f4]" />
        <div className="w-[1672px] shrink-0 flex flex-col bg-white border-x border-b border-[#1e88d8]">
          <div className="h-[4px] shrink-0" />
          <TitleBar />
          <Ribbon />
          <div className="h-[20px] ml-[3px] mr-[2px] flex bg-[#c2c6d1] relative shrink-0">
            <div className="w-[60px] h-[20px] bg-[#e1e4e9] border-r border-b border-[#333] flex items-center justify-center font-bold">Features</div>
            {TABS.map(([t, w]) => (
              <div key={t} className={`${w} h-[20px] bg-[#aeb0b3] border-r-2 border-b-2 border-[#444] flex items-center justify-center whitespace-nowrap`}>
                {t}
              </div>
            ))}
            <WheelHeadsUp />
          </div>
          <div className="flex-1 min-h-0 ml-[3px] mr-[2px] flex border-b border-[#222]">
            <Panel />
            <div className="flex-1 relative bg-[#c2c6d1] min-w-0">
              <Wheel />
              <Triad />
              <TaskPane />
            </div>
          </div>
          <div className="h-[15px] ml-[3px] mr-[2px] shrink-0 bg-[#e1e4e9] flex items-stretch">
            <div className="w-[65px] flex bg-[#c9cdd1] text-[#9a9ea3]">
              {["M3 1v8M9 1L4 5l5 4z", "M8 1L3 5l5 4z", "M3 1l5 4-5 4z", "M8 1v8M2 1l5 4-5 4z"].map((d) => (
                <div key={d} className="flex-1 flex items-center justify-center border-r border-[#aaa]">
                  <svg width="11" height="10" viewBox="0 0 11 10">
                    <path d="M1 1l0 0" />
                    <path d={d} fill="#b5b9bd" stroke="#9a9ea3" />
                  </svg>
                </div>
              ))}
            </div>
            <div className="w-[57px] bg-[#dde0e4] border-x border-b-2 border-[#333] flex items-center justify-center font-bold text-[12px]">Model</div>
            <div className="w-[67px] bg-[#aeb0b3] border-r border-b border-[#222] flex items-center justify-center">3D Views</div>
            <div className="w-[105px] bg-[#aeb0b3] border-r border-b border-[#222] flex items-center justify-center whitespace-nowrap">Motion Study 1</div>
          </div>
          <div className="h-px shrink-0 bg-[#999]" />
          <div className="h-[17px] shrink-0 bg-[#aab2ba] flex items-center border-b-0 pl-[2px] whitespace-nowrap">
            <span>SOLIDWORKS Education Edition - Instructional Use Only</span>
            <div className="ml-auto flex items-center h-full">
              <div className="w-[9px] h-full border-l border-[#d4d8dc]" />
              <div className="w-[71px] h-full border-l border-[#d4d8dc] flex items-center justify-center">Editing Part</div>
              <div className="w-[8px] h-full border-l border-[#d4d8dc]" />
              <div className="w-[7px] h-full border-l border-[#d4d8dc]" />
              <div className="w-[100px] h-full border-l border-[#d4d8dc] flex items-center pl-[43px]">IPS
                <span className="ml-[30px]"><svg width="7" height="4" viewBox="0 0 7 4"><path d="M0 4h7L3.500 0z" fill="#444" /></svg></span>
              </div>
              <div className="w-[103px] h-full pr-[7px] flex items-center justify-end">
                <svg width="15" height="15" viewBox="0 0 15 15">
                  <path d="M1 9L9 1h5v5l-8 8z" fill="#f2c84b" stroke="#8a6a10" />
                  <circle cx="11" cy="4" r="1.200" fill="#fff" stroke="#8a6a10" strokeWidth=".6" />
                </svg>
              </div>
            </div>
          </div>
          <div className="h-px shrink-0 bg-[#222]" />
        </div>
        <div className="w-[4px] shrink-0 bg-white" />
      </div>
      <div className="h-[6px] shrink-0 flex">
        <div className="w-[323px] bg-[#d3e3ea]" />
        <div className="w-[109px] bg-white" />
        <div className="w-[12px] bg-[#e6e9ea]" />
        <div className="w-[896px] bg-white" />
        <div className="flex-1 bg-[#d3e3ea]" />
      </div>
      <Taskbar />
    </div>
  );
}
